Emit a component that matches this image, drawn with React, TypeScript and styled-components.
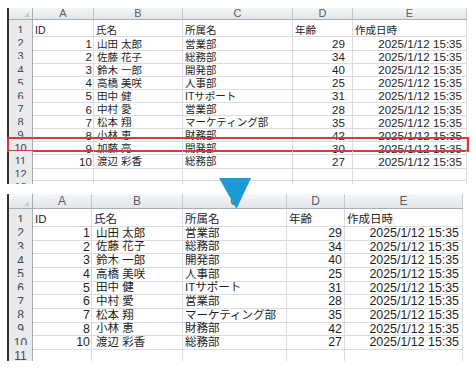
import React from 'react';
import styled, { createGlobalStyle } from 'styled-components';

const GlobalStyle = createGlobalStyle`
  html, body {
    margin: 0;
    padding: 0;
    background: #ffffff;
  }
  body {
    width: 474px;
    height: 371px;
    overflow: hidden;
    font-family: "Liberation Sans", "Noto Sans CJK JP", sans-serif;
  }
`;

type Col = { w: number; align: 'left' | 'right'; pad: number };

type SheetSpec = {
  cols: Col[];
  headH: number;
  rowH: number;
  height: number;
  numSize: number;
  jpSize: number;
  hdrSize: number;
  shift: number;
};

const Page = styled.div`
  position: relative;
  width: 474px;
  height: 371px;
  box-sizing: border-box;
  padding: 8px 0 0 7px;
  display: flex;
  flex-direction: column;
  gap: 10px;
`;

const SheetFrame = styled.div<{ $height: number }>`
  height: ${p => p.$height}px;
  border-left: 2px solid #2f3133;
  clip-path: inset(0 -8px 0 -8px);
  color: #1e1e1e;
`;

const Row = styled.div<{ $cols: string; $h: number; $marked?: boolean }>`
  position: relative;
  display: grid;
  width: max-content;
  grid-template-columns: ${p => p.$cols};
  height: ${p => p.$h}px;

  &::after {
    content: '';
    display: ${p => (p.$marked ? 'block' : 'none')};
    position: absolute;
    left: -2px;
    right: -2px;
    top: -1px;
    bottom: -1px;
    border: 2px solid #d43a3f;
    pointer-events: none;
  }
`;

const HeadCell = styled.div<{ $size: number }>`
  box-sizing: border-box;
  display: flex;
  align-items: center;
  justify-content: center;
  background: linear-gradient(#f5f6f8, #e2e5e9);
  border-right: 1px solid #c4c8cd;
  border-bottom: 1px solid #a9aeb4;
  font-family: "Liberation Sans", sans-serif;
  font-size: ${p => p.$size}px;
  color: #5a5d61;
  line-height: 1;
`;

const Corner = styled(HeadCell)`
  position: relative;
  border-right-color: #a9aeb4;

  &::after {
    content: '';
    position: absolute;
    right: 3px;
    bottom: 2px;
    border-left: 5px solid transparent;
    border-bottom: 5px solid #c5c8cc;
  }
`;

const RowNum = styled.div<{ $size: number; $shift: number }>`
  box-sizing: border-box;
  display: flex;
  align-items: center;
  justify-content: center;
  padding-top: ${p => p.$shift}px;
  background: #e8eaed;
  border-right: 1px solid #a9aeb4;
  border-bottom: 1px solid #c9ccd0;
  font-family: "Liberation Sans", sans-serif;
  font-size: ${p => p.$size}px;
  color: #45484c;
  line-height: 1;
`;

const Cell = styled.div<{ $align: string; $pad: number; $size: number; $shift: number }>`
  box-sizing: border-box;
  display: flex;
  align-items: center;
  justify-content: ${p => (p.$align === 'right' ? 'flex-end' : 'flex-start')};
  padding-top: ${p => p.$shift}px;
  padding-left: ${p => (p.$align === 'left' ? p.$pad : 0)}px;
  padding-right: ${p => (p.$align === 'right' ? p.$pad : 0)}px;
  border-right: 1px solid #dadcdf;
  border-bottom: 1px solid #dadcdf;
  font-family: "Liberation Sans", "Noto Sans CJK JP", sans-serif;
  font-size: ${p => p.$size}px;
  line-height: 1;
  white-space: nowrap;
`;

const Arrow = styled.svg`
  position: absolute;
  left: 219px;
  top: 178px;
  width: 32px;
  height: 31px;
`;

const DATE = '2025/1/12 15:35';

const people: [number, string, string, number][] = [
  [1, '山田 太郎', '営業部', 29],
  [2, '佐藤 花子', '総務部', 34],
  [3, '鈴木 一郎', '開発部', 40],
  [4, '高橋 美咲', '人事部', 25],
  [5, '田中 健', 'ITサポート', 31],
  [6, '中村 愛', '営業部', 28],
  [7, '松本 翔', 'マーケティング部', 35],
  [8, '小林 恵', '財務部', 42],
  [9, '加藤 亮', '開発部', 30],
  [10, '渡辺 彩香', '総務部', 27],
];

const topSpec: SheetSpec = {
  cols: [
    { w: 26, align: 'left', pad: 0 },
    { w: 61, align: 'right', pad: 1 },
    { w: 89, align: 'left', pad: 3 },
    { w: 110, align: 'left', pad: 2 },
    { w: 60, align: 'right', pad: 7 },
    { w: 114, align: 'right', pad: 4 },
  ],
  headH: 12,
  rowH: 13.1,
  height: 176,
  numSize: 11.6,
  jpSize: 10.5,
  hdrSize: 11,
  shift: 5,
};

const bottomSpec: SheetSpec = {
  cols: [
    { w: 26, align: 'left', pad: 0 },
    { w: 59, align: 'right', pad: 1 },
    { w: 91, align: 'left', pad: 4 },
    { w: 104, align: 'left', pad: 2 },
    { w: 58, align: 'right', pad: 2 },
    { w: 118, align: 'right', pad: 3 },
  ],
  headH: 14.5,
  rowH: 13.67,
  height: 167,
  numSize: 12.4,
  jpSize: 11.5,
  hdrSize: 12,
  shift: 5,
};

type Props = {
  spec: SheetSpec;
  data: ([number, string, string, number] | null)[];
  total: number;
  marked?: number;
};

const Sheet: React.FC<Props> = ({ spec, data, total, marked }) => {
  const template = spec.cols.map((c, i) => (i === 0 ? `${c.w - 2}px` : `${c.w}px`)).join(' ');
  const letters = ['A', 'B', 'C', 'D', 'E'];

  const rows = [];
  for (let n = 1; n <= total; n++) {
    let values: (string | number)[] = ['', '', '', '', ''];
    let jp = [false, true, true, false, false];
    if (n === 1) {
      values = ['ID', '氏名', '所属名', '年齢', '作成日時'];
      jp = [true, true, true, true, true];
    } else if (data[n - 2]) {
      const [id, name, dept, age] = data[n - 2]!;
      values = [id, name, dept, age, DATE];
    }
    rows.push(
      <Row key={n} $cols={template} $h={spec.rowH} $marked={marked === n}>
        <RowNum $size={spec.hdrSize} $shift={spec.shift}>{n}</RowNum>
        {values.map((v, i) => {
          const col = spec.cols[i + 1];
          const header = n === 1;
          return (
            <Cell
              key={i}
              $align={header ? 'left' : col.align}
              $pad={header ? 2 : col.pad}
              $size={jp[i] ? spec.jpSize : spec.numSize}
              $shift={spec.shift}
            >
              {v}
            </Cell>
          );
        })}
      </Row>
    );
  }

  return (
    <SheetFrame $height={spec.height}>
      <Row $cols={template} $h={spec.headH}>
        <Corner $size={spec.hdrSize} />
        {letters.map(l => (
          <HeadCell key={l} $size={spec.hdrSize}>{l}</HeadCell>
        ))}
      </Row>
      {rows}
    </SheetFrame>
  );
};

const App: React.FC = () => {
  const after = people.filter(p => p[0] !== 9);
  return (
    <>
      <GlobalStyle />
      <Page>
        <Sheet spec={topSpec} data={[...people, null, null]} total={13} marked={10} />
        <Sheet spec={bottomSpec} data={[...after, null]} total={11} />
        <Arrow viewBox="0 0 32 31">
          <polygon points="0,0 32,0 17.5,31" fill="#1c9ad6" />
        </Arrow>
      </Page>
    </>
  );
};

export default App;
